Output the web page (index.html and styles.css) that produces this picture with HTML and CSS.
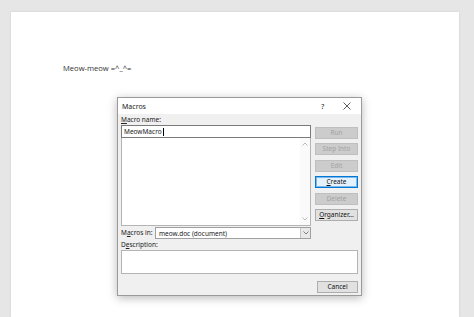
FILE: index.html
```html
<!DOCTYPE html>
<html lang="en">
<head>
    <meta charset="UTF-8">
    <title>Macros</title>
    <link rel="stylesheet" href="styles.css">
</head>
<body>
    <div class="page">
        <p class="doc-text">Meow-meow =^_^=</p>

        <div class="dialog">
            <div class="titlebar">
                <span class="title">Macros</span>
                <span class="help">?</span>
                <svg class="close" width="8" height="8" viewBox="0 0 8 8">
                    <path d="M0.5 0.5 L7.5 7.5 M7.5 0.5 L0.5 7.5" stroke="#333" stroke-width="0.8" fill="none"/>
                </svg>
            </div>
            <div class="dlg-body">
                <div class="main">
                    <div class="left">
                        <label class="lbl"><u>M</u>acro name:</label>
                        <div class="input">MeowMacro<span class="caret"></span></div>
                        <div class="list">
                            <div class="scroll">
                                <svg width="6" height="4" viewBox="0 0 6 4"><path d="M0.5 3.5 L3 1 L5.5 3.5" stroke="#a8a8a8" stroke-width="0.8" fill="none"/></svg>
                                <svg width="6" height="4" viewBox="0 0 6 4"><path d="M0.5 0.5 L3 3 L5.5 0.5" stroke="#a8a8a8" stroke-width="0.8" fill="none"/></svg>
                            </div>
                        </div>
                    </div>
                    <div class="buttons">
                        <div class="btn disabled">Run</div>
                        <div class="btn disabled">Step Into</div>
                        <div class="btn disabled">Edit</div>
                        <div class="btn default"><u>C</u>reate</div>
                        <div class="btn disabled">Delete</div>
                        <div class="btn"><u>O</u>rganizer...</div>
                    </div>
                </div>
                <div class="row-in">
                    <label class="lbl">M<u>a</u>cros in:</label>
                    <div class="combo">
                        <span>meow.doc (document)</span>
                        <span class="drop">
                            <svg width="6" height="4" viewBox="0 0 6 4"><path d="M0.5 0.5 L3 3 L5.5 0.5" stroke="#666" stroke-width="0.8" fill="none"/></svg>
                        </span>
                    </div>
                </div>
                <label class="lbl">D<u>e</u>scription:</label>
                <div class="desc"></div>
                <div class="footer">
                    <div class="btn cancel">Cancel</div>
                </div>
            </div>
        </div>
    </div>
</body>
</html>
```

FILE: styles.css
```css
*{
    margin: 0;
    padding: 0;
    box-sizing: border-box;
}
body{
    background: #e6e6e6;
    width: 474px;
    height: 317px;
    overflow: hidden;
    font-family: "Noto Sans", "Open Sans", sans-serif;
    color: #222;
}
.page{
    margin: 12px 15px 0 11px;
    height: 305px;
    background: #fff;
    position: relative;
    box-shadow: 0 0 2px rgba(0,0,0,0.12);
}
.doc-text{
    padding: 51px 0 0 52px;
    font-size: 7.6px;
    color: #333;
    font-family: "Open Sans", "Noto Sans", sans-serif;
}
.dialog{
    position: absolute;
    left: 106px;
    top: 85px;
    width: 245px;
    height: 199px;
    background: #f0f0f0;
    border: 1px solid #9a9a9a;
    box-shadow: 0 2px 9px rgba(0,0,0,0.28);
    font-size: 6.5px;
}
.titlebar{
    height: 16px;
    background: #fff;
    display: flex;
    align-items: center;
    padding-left: 4px;
    font-size: 7px;
}
.title{
    flex: 1;
}
.help{
    width: 10px;
    margin-right: 12px;
    font-size: 7.5px;
}
.close{
    margin-right: 10px;
}
.dlg-body{
    padding: 1px 3px 0 3px;
}
.main{
    display: grid;
    grid-template-columns: 190px 43px;
    column-gap: 4px;
}
.lbl{
    display: block;
    height: 10px;
    line-height: 10px;
}
.input{
    height: 13px;
    border: 1px solid #7a7a7a;
    background: #fff;
    padding-left: 2px;
    line-height: 11px;
    display: flex;
    align-items: center;
}
.caret{
    width: 1px;
    height: 8px;
    background: #000;
    margin-left: 1px;
}
.list{
    height: 88px;
    border: 1px solid #b4b4b4;
    border-top: none;
    background: #fff;
    display: flex;
    justify-content: flex-end;
}
.scroll{
    width: 10px;
    display: flex;
    flex-direction: column;
    justify-content: space-between;
    align-items: center;
    padding: 4px 0;
    background: #fafafa;
}
.buttons{
    display: flex;
    flex-direction: column;
    gap: 4.4px;
    padding-top: 12px;
}
.btn{
    height: 12px;
    line-height: 10px;
    text-align: center;
    border: 1px solid #adadad;
    background: #e1e1e1;
    color: #111;
}
.btn.disabled{
    background: #cccccc;
    border-color: #bfbfbf;
    color: #a3a3a3;
}
.btn.default{
    border-color: #0078d7;
    background: #e5f1fb;
    box-shadow: inset 0 0 0 1px #7fb8e8;
}
.row-in{
    display: flex;
    align-items: center;
    height: 12px;
    margin-top: 1px;
}
.row-in .lbl{
    width: 34px;
}
.combo{
    width: 156px;
    height: 12px;
    border: 1px solid #a0a0a0;
    background: #fff;
    display: flex;
    align-items: center;
    justify-content: space-between;
    padding-left: 3px;
}
.drop{
    width: 10px;
    height: 10px;
    background: #e8e8e8;
    border-left: 1px solid #c4c4c4;
    display: flex;
    align-items: center;
    justify-content: center;
}
.row-in + .lbl{
    margin-top: 1px;
}
.desc{
    height: 24px;
    border: 1px solid #b4b4b4;
    background: #fff;
}
.footer{
    display: flex;
    justify-content: flex-end;
    padding: 7px 0 0 0;
}
.btn.cancel{
    width: 41px;
}
```
